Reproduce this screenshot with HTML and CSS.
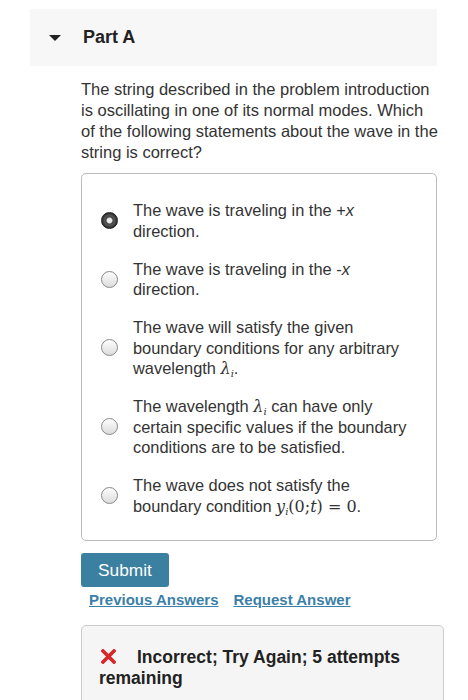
FILE: index.html
```html
<!DOCTYPE html>
<html lang="en">
<head>
    <meta charset="UTF-8">
    <meta name="viewport" content="width=device-width, initial-scale=1.0">
    <title>Part A</title>
    <link rel="stylesheet" href="styles.css">
</head>
<body>
    <div class="part">
        <div class="part-header">
            <span class="caret"></span>
            <h2>Part A</h2>
        </div>

        <div class="part-body">
            <p class="question">The string described in the problem introduction is oscillating in one of its normal modes. Which of the following statements about the wave in the string is correct?</p>

            <div class="choices">
                <label class="choice">
                    <span class="radio checked"></span>
                    <span class="choice-text">The wave is traveling in the +<i>x</i> direction.</span>
                </label>
                <label class="choice">
                    <span class="radio"></span>
                    <span class="choice-text">The wave is traveling in the -<i>x</i> direction.</span>
                </label>
                <label class="choice">
                    <span class="radio"></span>
                    <span class="choice-text">The wave will satisfy the given boundary conditions for any arbitrary wavelength <span class="math">&lambda;<sub>i</sub></span>.</span>
                </label>
                <label class="choice">
                    <span class="radio"></span>
                    <span class="choice-text">The wavelength <span class="math">&lambda;<sub>i</sub></span> can have only certain specific values if the boundary conditions are to be satisfied.</span>
                </label>
                <label class="choice">
                    <span class="radio"></span>
                    <span class="choice-text">The wave does not satisfy the boundary condition <span class="math"><i>y</i><sub>i</sub><span class="up">(0;</span><i>t</i><span class="up">)&nbsp;=&nbsp;0</span></span>.</span>
                </label>
            </div>

            <button class="submit">Submit</button>

            <div class="links">
                <a href="#">Previous Answers</a>
                <a href="#">Request Answer</a>
            </div>

            <div class="feedback">
                <svg class="cross" width="15" height="15" viewBox="0 0 15 15">
                    <path d="M2 2 L13 13 M13 2 L2 13" stroke="#d8262b" stroke-width="3.6" stroke-linecap="square"/>
                </svg>Incorrect; Try Again; 5 attempts remaining
            </div>
        </div>
    </div>
</body>
</html>
```

FILE: styles.css
```css
body {
    font-family: "Liberation Sans", Arial, Helvetica, sans-serif;
    color: #333;
    margin: 0;
    background-color: white;
}
.part {
    padding-top: 9px;
}
.part-header {
    display: flex;
    align-items: center;
    margin-left: 30px;
    width: 407px;
    height: 57px;
    background-color: #f7f7f7;
}
.caret {
    width: 0;
    height: 0;
    margin-left: 19px;
    margin-right: 22px;
    border-left: 6px solid transparent;
    border-right: 6px solid transparent;
    border-top: 6px solid #222;
}
h2 {
    margin: 0;
    font-size: 18px;
    font-weight: bold;
    color: #222;
}
.part-body {
    margin-left: 81px;
    width: 363px;
}
.question {
    width: 358px;
    font-size: 16.5px;
    line-height: 21px;
    margin: 13px 0 10px 0;
}
.choices {
    width: 354px;
    border: 1px solid #bbb;
    border-radius: 5px;
    padding: 26px 0 24px 0;
    display: flex;
    flex-direction: column;
    gap: 17.5px;
}
.choice {
    display: flex;
    align-items: center;
    gap: 15px;
    padding-left: 19px;
    font-size: 16.4px;
    line-height: 20.5px;
}
.choice-text {
    width: 282px;
}
.radio {
    flex: none;
    width: 15px;
    height: 15px;
    border-radius: 50%;
    border: 1px solid #888;
    background: linear-gradient(#fdfdfd, #dcdcdc);
}
.radio.checked {
    border-color: #222;
    background: radial-gradient(circle, #f4f4f4 0, #e0e0e0 2.5px, #444 3.5px, #555 5px, #222 8px);
}
.math {
    font-family: "DejaVu Serif", "Liberation Serif", serif;
    font-style: italic;
    font-size: 16px;
    line-height: 0;
}
.math .up {
    font-style: normal;
}
.math sub {
    font-size: 10px;
    line-height: 0;
    vertical-align: -3px;
}
.submit {
    display: block;
    margin-top: 12px;
    width: 88px;
    height: 34px;
    border: none;
    border-radius: 3px;
    background-color: #3b7fa1;
    color: white;
    font-family: "Liberation Sans", Arial, sans-serif;
    font-size: 17.3px;
    cursor: pointer;
}
.links {
    display: flex;
    gap: 15px;
    margin-top: 4px;
    padding-left: 8px;
}
.links a {
    color: #3b7fa8;
    font-size: 15px;
    font-weight: bold;
    line-height: 18px;
}
.feedback {
    margin-top: 16px;
    padding: 21px 17px 40px 17px;
    border: 1px solid #ccc;
    border-radius: 5px;
    background-color: #f5f5f5;
    font-size: 17.5px;
    font-weight: bold;
    line-height: 21px;
    color: #222;
}
.cross {
    margin-left: 2px;
    margin-right: 21px;
    vertical-align: -1px;
}
```
